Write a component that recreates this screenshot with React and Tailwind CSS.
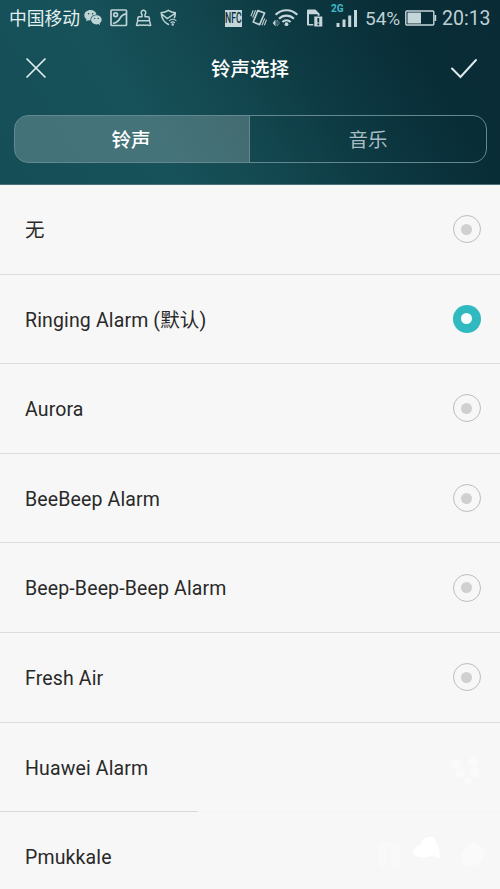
import React from "react";

const TONES = [
  { name: "无", state: "off" },
  { name: "Ringing Alarm (默认)", state: "on" },
  { name: "Aurora", state: "off" },
  { name: "BeeBeep Alarm", state: "off" },
  { name: "Beep-Beep-Beep Alarm", state: "off" },
  { name: "Fresh Air", state: "off" },
  { name: "Huawei Alarm", state: "hidden" },
  { name: "Pmukkale", state: "hidden" },
];

function WeChatIcon() {
  return (
    <svg className="ml-1 h-4 w-[18px] shrink-0" viewBox="0 0 18 16" fill="#bdd3d6">
      <path d="M6.6 0C3 0 .3 2.3.3 5.2c0 1.7.9 3.1 2.3 4.1L2 11.3l2.3-1.1c.7.2 1.4.3 2.1.3C6.2 6.900 8.800 4.500 12.600 4.400 12 1.900 9.600 0 6.600 0Z" />
      <path d="M12.400 5.200c-3 0-5.300 2-5.300 4.600s2.300 4.600 5.300 4.600c.6 0 1.200-.1 1.800-.3l1.900 1.100-.5-1.800c1.300-.9 2.100-2.200 2.100-3.600 0-2.600-2.300-4.600-5.300-4.600Z" />
      <g fill="#174d54"><circle cx="4.600" cy="3.700" r=".8" /><circle cx="8.600" cy="3.700" r=".8" /><circle cx="10.700" cy="8.400" r=".7" /><circle cx="14.200" cy="8.400" r=".7" /></g>
    </svg>
  );
}

function PictureIcon() {
  return (
    <svg className="ml-2 h-[18px] w-[18px] shrink-0" viewBox="0 0 18 18" fill="none" stroke="#bdd3d6" strokeWidth="1.700">
      <rect x="1" y="1" width="15.500" height="15.500" rx=".8" />
      <circle cx="5.600" cy="5.700" r="1.900" />
      <path d="M3 14.500c3.600-1 5.700-2.600 7-5.200 1.300-2.600 3-4.100 6.300-4.500" />
    </svg>
  );
}

function BrushIcon() {
  return (
    <svg className="ml-[7px] h-[18px] w-[17px] shrink-0" viewBox="0 0 17 18" fill="none" stroke="#bdd3d6" strokeWidth="1.500" strokeLinejoin="round">
      <path d="M7 7.800V5.400a2.300 2.300 0 1 1 3 0v2.400h2.800c1 0 1.600.6 1.600 1.600v2.200l1.300 4.600c-1.300.5-2.500.3-3.700-.3-1.300.6-2.400.6-3.500 0-1.200.6-2.300.6-3.500 0-1 .6-2.200.8-3.500.3l1.200-4.600V9.400c0-1 .6-1.600 1.600-1.600ZM2.800 11.700h11.500" />
    </svg>
  );
}

function ShieldIcon() {
  return (
    <svg className="ml-2 h-[18px] w-[18px] shrink-0" viewBox="0 0 18 18" fill="none" stroke="#bdd3d6" strokeWidth="1.500" strokeLinecap="round">
      <path d="M8.500 15.500C4.400 13.500 1.500 9.500 1.200 3.700 4 3.500 6.300 2.700 8.300 1.300c2 1.400 4.300 2.200 7 2.400 0 1.800-.3 3.500-.9 5M2 5.300l5.200 4.300 7.500-5" />
      <path d="M9.500 11.600c2-1.600 4.500-1.600 6.500 0M11 13.600c1.100-.9 2.500-.9 3.500 0" strokeWidth="1.100" />
      <circle cx="12.700" cy="15.500" r=".5" />
    </svg>
  );
}

function VibrateIcon() {
  return (
    <svg className="ml-2 h-[18px] w-[17px] shrink-0" viewBox="0 0 17 18" fill="none" stroke="#c0d1d6" strokeWidth="1.700" strokeLinejoin="round">
      <path d="M7.800 1.600 14.600 4 9.600 15.600 3.200 13Z" />
      <path d="M3.200 1.300.9 7.200M5.600 1.300 2.700 8.600M14.700 9.400 12 16.300M16.500 10.600 14.400 16.300" strokeWidth="1.100" />
    </svg>
  );
}

function WifiIcon() {
  return (
    <svg className="ml-[5px] h-[18px] w-[27px] shrink-0" viewBox="0 0 27 18" fill="none" stroke="#c5d6da" strokeWidth="2.200">
      <path d="M3.600 5.800c6-6.100 15.800-6.100 21.700 0M7 9.700c4.200-4.200 10.700-4.200 14.900 0M10.400 13c2.300-2.100 5.900-2.100 8.200 0" />
      <circle cx="14.500" cy="15.200" r="1.900" fill="#c5d6da" stroke="none" />
      <path d="M3.500 10.500v7L.7 14Z" fill="#c5d6da" stroke="none" />
      <path d="M5 11v6l2.500-3Z" stroke="#8ca3aa" strokeWidth=".7" />
    </svg>
  );
}

function SimIcon() {
  return (
    <svg className="ml-[7px] h-[18px] w-[17px] shrink-0" viewBox="0 0 17 18">
      <path d="M1 1.800C1 .9 1.500.5 2.200.5h7.200l4.200 4.200v2.100h-2V5.300H3v9.600h4.300v1.700H2.200c-.8 0-1.200-.5-1.200-1.200Z" fill="#c5d6da" />
      <path d="M8.300 7.500h8v10h-8Z" fill="#c5d6da" />
      <path d="M12.300 9v4.500M12.300 14.600v1.700" stroke="#0b3039" strokeWidth="1.800" />
    </svg>
  );
}

function SignalIcon() {
  return (
    <div className="ml-2 flex h-[22px] w-[28px] shrink-0 flex-col">
      <span className="-mt-[2px] h-2 text-[10px] leading-[8px] font-bold text-[#45b9ca]">2G</span>
      <svg className="-mt-[3px] ml-[5px] h-[18px] w-[22px]" viewBox="0 0 22 18" fill="#c5d6da">
        <path d="M.500 13h3v4h-3ZM6.500 9.500h3V17h-3ZM12.200 5.500h3V17h-3ZM18 0h3v17h-3Z" />
      </svg>
    </div>
  );
}

function StatusBar() {
  return (
    <div className="flex h-9 items-center pl-[9px] text-[#bfd0d4]">
      <span className="w-[71px] shrink-0 pt-px text-[17.800px] leading-[18px] whitespace-nowrap text-[#e2f0f1]">中国移动</span>
      <WeChatIcon />
      <PictureIcon />
      <BrushIcon />
      <ShieldIcon />
      <div className="ml-[47px] flex h-[17px] w-[17px] shrink-0 items-center justify-center bg-[#c5d6da]">
        <span className="scale-x-[.58] text-[15px] leading-none font-medium text-[#0d323a]">NFC</span>
      </div>
      <VibrateIcon />
      <WifiIcon />
      <SimIcon />
      <SignalIcon />
      <span className="ml-[6px] w-[37px] shrink-0 pt-[2px] text-[19px] leading-5 whitespace-nowrap">54%</span>
      <svg className="ml-[3px] h-4 w-8 shrink-0" viewBox="0 0 32 16">
        <rect x=".8" y="1" width="28" height="14" rx="1" fill="none" stroke="#c5d6da" strokeWidth="1.400" />
        <path d="M2.500 2.500h13.500v11H2.500Z" fill="#c5d6da" />
        <path d="M29.500 5h1.700v6h-1.700Z" fill="#c5d6da" />
      </svg>
      <span className="ml-[5px] pt-[2px] text-[19.500px] leading-5 whitespace-nowrap">20:13</span>
    </div>
  );
}

function Radio({ state }) {
  if (state === "hidden") return null;
  if (state === "on")
    return (
      <span className="flex size-7 items-center justify-center rounded-full bg-[#31b9c0]">
        <span className="size-[11px] rounded-full bg-[#f8fefe]" />
      </span>
    );
  return (
    <span className="flex size-7 items-center justify-center rounded-full border border-[#bdbdbd]">
      <span className="size-[11px] rounded-full bg-[#d0d0d0]" />
    </span>
  );
}

function Watermark() {
  return (
    <svg className="pointer-events-none absolute right-0 bottom-0 h-[159px] w-[170px]" viewBox="0 0 170 159" fill="#fcfcfc">
      <g opacity=".7"><circle cx="126" cy="33" r="5" /><circle cx="143" cy="32" r="5" /><circle cx="130" cy="43" r="5" /><circle cx="145" cy="43" r="5" /><circle cx="138" cy="51" r="4" /></g>
      <path d="M83 124c0-5 4-9 8-9 0-5 4-8 8-8 4-1 7 2 7 6 3 3 4 9 4 15-3 1-5-1-7-3-4 3-13 3-18 1Z" fill="#fff" />
      <path d="M49 113h21v24h-8v-20h-6v20h-7Z" opacity=".4" />
      <path d="M131 126c2-7 8-8 11-14 5 1 12 5 13 10-2 11-11 17-22 13Z" opacity=".6" />
    </svg>
  );
}

export default function App() {
  return (
    <div className="relative flex h-[889px] w-[500px] flex-col overflow-hidden bg-[#f7f7f7] font-[Roboto,'Noto_Sans_CJK_SC',sans-serif]">
      <header className="h-[185px] shrink-0 border-b border-[#4d747b] bg-[linear-gradient(60deg,#154e57_0%,#175159_30%,#13474f_47%,#0d3a43_62%,#092d37_82%,#092b35_100%)]">
        <StatusBar />
        <div className="flex h-[66px] items-center justify-between pr-[22px] pl-[25px]">
          <svg className="mb-[2px] size-[22px]" viewBox="0 0 22 22" fill="none" stroke="#e0eff0" strokeWidth="1.700" strokeLinecap="round">
            <path d="m2 2 18 18M20 2 2 20" />
          </svg>
          <h1 className="ml-[3px] pt-[2px] text-[19.500px] leading-6 font-medium text-white">铃声选择</h1>
          <svg className="mb-[2px] h-[22px] w-7" viewBox="0 0 28 22" fill="none" stroke="#e0eaec" strokeWidth="2" strokeLinecap="round">
            <path d="m2 11.500 8.500 8.500L26 3" />
          </svg>
        </div>
        <div className="mt-[13px] ml-[14px] flex h-12 w-[473px] overflow-hidden rounded-[14px] border border-[#638890]">
          <div className="flex w-[235px] items-center justify-center border-r border-[#638890] bg-white/20 pt-[3px] pr-[2px] text-[19.500px] font-medium text-white">铃声</div>
          <div className="flex flex-1 items-center justify-center pt-[3px] text-[19.500px] text-[#a9bdc2]">音乐</div>
        </div>
      </header>
      <main className="flex shrink-0 flex-col">
        {TONES.map(({ name, state }) => (
          <div key={name} className="flex h-[89.600px] shrink-0 flex-col">
            <div className="flex flex-1 items-center justify-between pr-[19.500px] pl-[25px]">
              <span className="pt-[3.500px] text-[19.500px] leading-6 tracking-[0.140px] text-[#292929]">{name}</span>
              <Radio state={state} />
            </div>
            <div className={name === "Huawei Alarm" ? "h-px bg-[linear-gradient(90deg,#d9d9d9_198px,#f4f4f4_198px)]" : "h-px bg-[#dcdcdc]"} />
          </div>
        ))}
      </main>
      <Watermark />
    </div>
  );
}
